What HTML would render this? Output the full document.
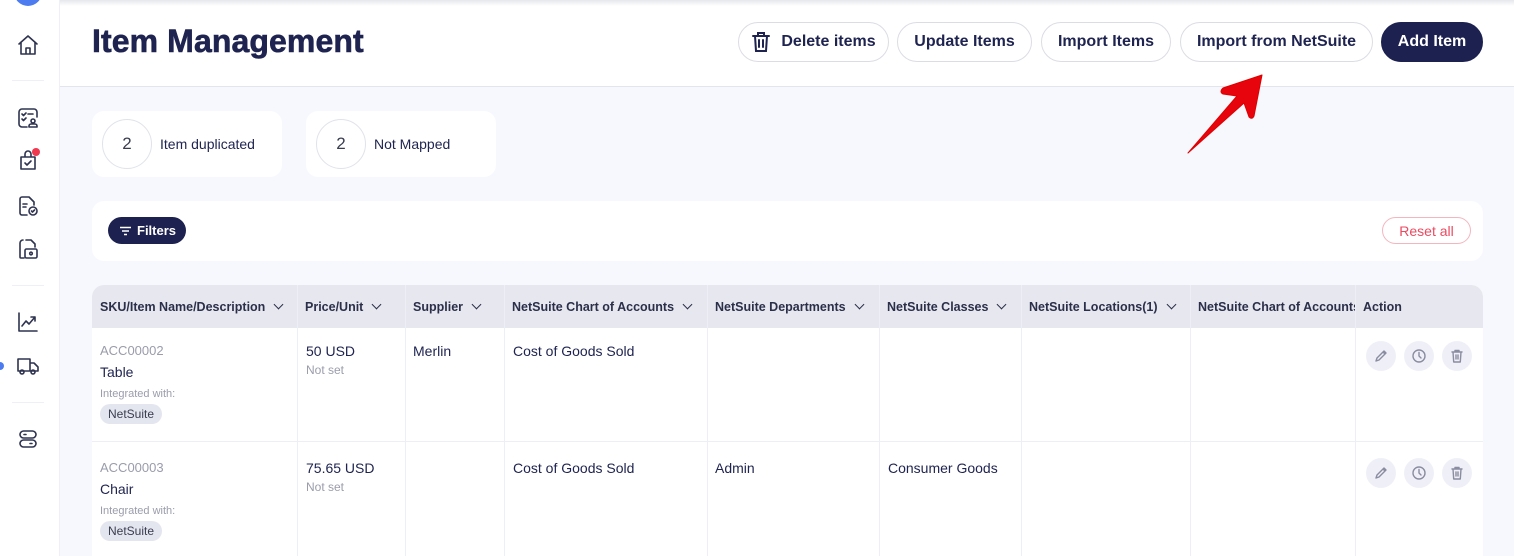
<!DOCTYPE html>
<html><head><meta charset="utf-8"><style>
*{box-sizing:border-box;margin:0;padding:0}
body{width:1514px;height:556px;overflow:hidden;background:#f7f8fd;font-family:"Liberation Sans",sans-serif;color:#1e2350;position:relative}
.abs{position:absolute}
.side{left:0;top:0;width:60px;height:556px;background:#fff;border-right:1px solid #eef0f5}
.side svg{position:absolute;left:16px;width:24px;height:24px;fill:none;stroke:#2e3350;stroke-width:1.6;stroke-linecap:round;stroke-linejoin:round}
.sep{position:absolute;left:12px;width:32px;height:1px;background:#eef0f5}
.header{left:60px;top:0;width:1454px;height:87px;background:#fff;border-bottom:1px solid #e3e5ee}
.topsh{left:60px;top:0;width:1454px;height:6px;background:linear-gradient(#e6e7ed,#fff)}
h1{position:absolute;left:92px;top:23px;font-size:32px;font-weight:bold;color:#1e2350;letter-spacing:0.1px;-webkit-text-stroke:0.6px #1e2350}
.btn{position:absolute;top:22px;height:40px;border:1px solid #dcdde3;border-radius:20px;background:#fff;font-size:16px;font-weight:bold;color:#1e2350;display:flex;align-items:center;justify-content:center}
.card{background:#fff;border-radius:12px}
.circ{position:absolute;width:50px;height:50px;border:1px solid #e1e3ea;border-radius:50%;font-size:17px;color:#3a3d4f;display:flex;align-items:center;justify-content:center}
.lbl{position:absolute;font-size:14px;color:#1e2350}
.th{position:absolute;top:285px;height:43px;background:#e7e8ef;font-size:12.5px;font-weight:bold;color:#2b2f4a;display:flex;align-items:center;padding-left:8px;white-space:nowrap;overflow:hidden}
.th span.c{display:inline-block;width:7px;height:7px;border-right:1.6px solid #2b2f4a;border-bottom:1.6px solid #2b2f4a;transform:rotate(45deg);margin-left:10px;margin-top:-4px}
.vl{position:absolute;top:285px;width:1px;height:271px;background:#eeeff6}
.hl{position:absolute;left:92px;width:1391px;height:1px;background:#eeeff4}
.t{position:absolute;font-size:14px;color:#1e2350;white-space:nowrap}
.g{position:absolute;font-size:12px;color:#9a9cab}
.pill{position:absolute;height:20px;padding:0 8px;background:#e4e6ef;border-radius:10px;font-size:12px;color:#3a3d4f;line-height:20px}
.act{position:absolute;width:30px;height:30px;border-radius:50%;background:#efeff8}
.act svg{position:absolute;left:7px;top:7px;width:16px;height:16px;fill:none;stroke:#8a8ca0;stroke-width:1.4;stroke-linecap:round;stroke-linejoin:round}
</style></head><body>
<div class="abs side">
<div class="abs" style="left:14px;top:-22px;width:28px;height:28px;border-radius:50%;background:#4d7cf0"></div>
<svg style="top:33px" viewBox="0 0 24 24"><path d="M3 11L12 3l9 8M5 9v12h14V9M10 21v-6h4v6"/></svg>
<div class="sep" style="top:80px"></div>
<svg style="top:106px" viewBox="0 0 24 24"><path d="M11 21H6a3 3 0 0 1-3-3V6a3 3 0 0 1 3-3h12a3 3 0 0 1 3 3v5M6 8l1.5 1.5L10 7M6 13l1.5 1.5L10 12M12 8h5"/><circle cx="17" cy="15" r="2"/><path d="M13 21v-1a2 2 0 0 1 2-2h4a2 2 0 0 1 2 2v1z"/></svg>
<svg style="top:149px" viewBox="0 0 24 24"><path d="M5 8h14v12H5zM9 8V5a3 3 0 0 1 6 0v3M9 14l2 2 4-4"/></svg>
<div class="abs" style="left:32px;top:148px;width:8px;height:8px;border-radius:50%;background:#f0384f"></div>
<svg style="top:194px" viewBox="0 0 24 24"><path d="M11 21H6a2 2 0 0 1-2-2V5a2 2 0 0 1 2-2h7l5 5v3M7 10h4M7 13h3"/><circle cx="17" cy="17" r="4"/><path d="M15.5 17l1 1 2-2"/></svg>
<svg style="top:237px" viewBox="0 0 24 24"><path d="M10 3h5l4 4v3M4 20V6a3 3 0 0 1 3-3M4 20a1 1 0 0 0 1 1h3"/><rect x="9" y="12" width="12" height="9" rx="1.5"/><circle cx="15" cy="16.5" r="1.3"/></svg>
<div class="sep" style="top:285px"></div>
<svg style="top:310px" viewBox="0 0 24 24"><path d="M3 3v18h18M6 16l4-5 3 3 6-7M15 7h4v4"/></svg>
<svg style="top:354px" viewBox="0 0 24 24"><path d="M2 5h12v12H2zM14 9h4l4 4v4h-8"/><circle cx="6" cy="18" r="2"/><circle cx="17" cy="18" r="2"/></svg>
<div class="abs" style="left:-4px;top:362px;width:8px;height:8px;border-radius:50%;background:#4d7cf0"></div>
<div class="sep" style="top:402px"></div>
<svg style="top:427px" viewBox="0 0 24 24"><rect x="4" y="4" width="16" height="7" rx="3.5"/><rect x="4" y="13" width="16" height="7" rx="3.5"/><path d="M8 7.5h2M14 16.5h2"/></svg>
</div>
<div class="abs header"></div>
<div class="abs topsh"></div>
<h1>Item Management</h1>
<div class="btn" style="left:738px;width:151px"><svg width="20" height="22" viewBox="0 0 20 22" style="margin-right:10px" fill="none" stroke="#1e2350" stroke-width="2" stroke-linecap="round"><path d="M2 5h16M7 5V2h6v3M4 5l1 15h10l1-15M8 9v7M12 9v7"/></svg>Delete items</div>
<div class="btn" style="left:897px;width:135px">Update Items</div>
<div class="btn" style="left:1041px;width:130px">Import Items</div>
<div class="btn" style="left:1180px;width:193px">Import from NetSuite</div>
<div class="btn" style="left:1381px;width:102px;background:#1d2150;border-color:#1d2150;color:#fff">Add Item</div>
<svg class="abs" style="left:1180px;top:70px" width="90" height="90" viewBox="1180 70 90 90"><path d="M1188 153 L1244 103 L1249 117 Q1252 120 1254 116 L1262 75 L1223 88 Q1219 92 1223 94 L1237 96 Z" fill="#e8040c" stroke="#d00" stroke-width="1" stroke-linejoin="round"/></svg>
<div class="abs card" style="left:92px;top:111px;width:190px;height:66px"></div>
<div class="circ" style="left:102px;top:119px">2</div><div class="lbl" style="left:160px;top:136px">Item duplicated</div>
<div class="abs card" style="left:306px;top:111px;width:190px;height:66px"></div>
<div class="circ" style="left:316px;top:119px">2</div><div class="lbl" style="left:374px;top:136px">Not Mapped</div>
<div class="abs card" style="left:92px;top:201px;width:1391px;height:60px"></div>
<div class="abs" style="left:108px;top:217px;width:78px;height:27px;border-radius:14px;background:#1d2150;color:#fff;font-size:13px;font-weight:bold;display:flex;align-items:center;padding-left:12px"><svg width="11" height="10" viewBox="0 0 11 10" stroke="#fff" stroke-width="1.4" style="margin-right:6px"><path d="M0 1.5h11M2 5h7M4 8.5h3"/></svg>Filters</div>
<div class="abs" style="left:1382px;top:217px;width:89px;height:27px;border-radius:14px;border:1px solid #f5b5bf;color:#ec4a60;font-size:14px;display:flex;align-items:center;justify-content:center">Reset all</div>
<div class="abs" style="left:92px;top:285px;width:1391px;height:271px;background:#fff;border-radius:12px 12px 0 0"></div>
<div class="th" style="left:92px;width:205px;border-radius:12px 0 0 0">SKU/Item Name/Description<span class="c"></span></div>
<div class="th" style="left:297px;width:108px">Price/Unit<span class="c"></span></div>
<div class="th" style="left:405px;width:99px">Supplier<span class="c"></span></div>
<div class="th" style="left:504px;width:203px">NetSuite Chart of Accounts<span class="c"></span></div>
<div class="th" style="left:707px;width:172px">NetSuite Departments<span class="c"></span></div>
<div class="th" style="left:879px;width:142px">NetSuite Classes<span class="c"></span></div>
<div class="th" style="left:1021px;width:169px">NetSuite Locations(1)<span class="c"></span></div>
<div class="th" style="left:1190px;width:165px">NetSuite Chart of Accounts</div>
<div class="th" style="left:1355px;width:128px;border-radius:0 12px 0 0">Action</div>
<div class="vl" style="left:297px"></div><div class="vl" style="left:405px"></div><div class="vl" style="left:504px"></div><div class="vl" style="left:707px"></div><div class="vl" style="left:879px"></div><div class="vl" style="left:1021px"></div><div class="vl" style="left:1190px"></div><div class="vl" style="left:1355px"></div>
<div class="hl" style="top:441px"></div>
<div class="g" style="left:100px;top:343px;font-size:13px">ACC00002</div>
<div class="t" style="left:100px;top:364px">Table</div>
<div class="g" style="left:100px;top:388px;font-size:11px">Integrated with:</div>
<div class="pill" style="left:100px;top:404px">NetSuite</div>
<div class="t" style="left:306px;top:343px">50 USD</div><div class="g" style="left:306px;top:363px">Not set</div>
<div class="t" style="left:413px;top:343px">Merlin</div>
<div class="t" style="left:513px;top:343px">Cost of Goods Sold</div>
<div class="g" style="left:100px;top:460px;font-size:13px">ACC00003</div>
<div class="t" style="left:100px;top:481px">Chair</div>
<div class="g" style="left:100px;top:505px;font-size:11px">Integrated with:</div>
<div class="pill" style="left:100px;top:521px">NetSuite</div>
<div class="t" style="left:306px;top:460px">75.65 USD</div><div class="g" style="left:306px;top:480px">Not set</div>
<div class="t" style="left:513px;top:460px">Cost of Goods Sold</div>
<div class="t" style="left:715px;top:460px">Admin</div>
<div class="t" style="left:888px;top:460px">Consumer Goods</div>
<div class="act" style="left:1366px;top:341px"><svg viewBox="0 0 16 16"><path d="M3 13l1-3 7-7 2 2-7 7zM10 4l2 2"/></svg></div>
<div class="act" style="left:1404px;top:341px"><svg viewBox="0 0 16 16"><circle cx="8" cy="8" r="6"/><path d="M8 4.5V8l2 2"/></svg></div>
<div class="act" style="left:1442px;top:341px"><svg viewBox="0 0 16 16"><path d="M3 4h10M6 4V2.5h4V4M4 4l.7 10h6.6L12 4M7 7v4M9 7v4"/></svg></div>
<div class="act" style="left:1366px;top:458px"><svg viewBox="0 0 16 16"><path d="M3 13l1-3 7-7 2 2-7 7zM10 4l2 2"/></svg></div>
<div class="act" style="left:1404px;top:458px"><svg viewBox="0 0 16 16"><circle cx="8" cy="8" r="6"/><path d="M8 4.5V8l2 2"/></svg></div>
<div class="act" style="left:1442px;top:458px"><svg viewBox="0 0 16 16"><path d="M3 4h10M6 4V2.5h4V4M4 4l.7 10h6.6L12 4M7 7v4M9 7v4"/></svg></div>
</body></html>
